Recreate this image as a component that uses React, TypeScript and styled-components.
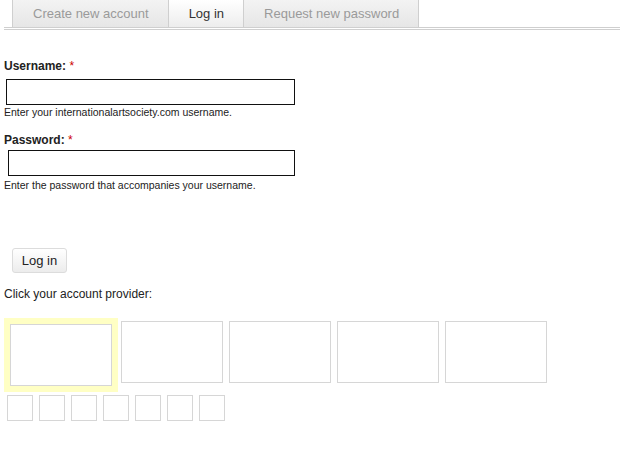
import React from "react";
import styled, { createGlobalStyle } from "styled-components";

const GlobalStyle = createGlobalStyle`
  html, body {
    margin: 0;
    padding: 0;
    background: #ffffff;
  }
  body {
    font-family: "Liberation Sans", Arial, sans-serif;
    color: #222;
  }
  * { box-sizing: border-box; }
`;

const Page = styled.div`
  width: 620px;
  height: 469px;
  overflow: hidden;
`;

const TabBar = styled.ul`
  display: flex;
  list-style: none;
  margin: 0 0 0 4px;
  padding: 0 0 0 8px;
  border-bottom: 3px double #cfcfcf;
`;

const Tab = styled.li<{ $active?: boolean; $last?: boolean }>`
  height: 27px;
  line-height: 27px;
  padding: 0 19px 0 20px;
  font-size: 13px;
  color: ${(p) => (p.$active ? "#333" : "#9a9a9a")};
  background: ${(p) =>
    p.$active
      ? "linear-gradient(#ffffff, #ededed)"
      : "linear-gradient(#f3f3f3, #e6e6e6)"};
  border-left: 1px solid #cfcfcf;
  border-right: ${(p) => (p.$last ? "1px solid #cfcfcf" : "none")};
  white-space: nowrap;
`;

const Form = styled.form`
  padding: 29px 0 0 4px;
`;

const Field = styled.div<{ $space: number }>`
  margin-bottom: ${(p) => p.$space}px;
`;

const Label = styled.label<{ $gap: number }>`
  display: block;
  font-size: 12px;
  line-height: 15px;
  font-weight: bold;
  color: #222;
  margin-bottom: ${(p) => p.$gap}px;
`;

const Required = styled.span`
  color: #cc0000;
  font-weight: normal;
`;

const TextInput = styled.input<{ $indent: number; $w: number }>`
  display: block;
  width: ${(p) => p.$w}px;
  height: 26px;
  margin: 0 0 0 ${(p) => p.$indent}px;
  border: 1px solid #111;
  padding: 2px 4px;
  font-family: "Liberation Sans", Arial, sans-serif;
  font-size: 12px;
  outline: none;
  background: #fff;
`;

const Description = styled.div<{ $top: number }>`
  font-size: 10.5px;
  line-height: 13px;
  color: #222;
  margin-top: ${(p) => p.$top}px;
`;

const SubmitButton = styled.button`
  display: block;
  margin: 56px 0 0 8px;
  width: 55px;
  height: 25px;
  padding: 0;
  font-family: "Liberation Sans", Arial, sans-serif;
  font-size: 13px;
  color: #222;
  background: linear-gradient(#ffffff, #ececec);
  border: 1px solid #dcdcdc;
  border-radius: 3px;
`;

const ProviderPrompt = styled.div`
  font-size: 12px;
  line-height: 15px;
  color: #222;
  margin-top: 14px;
`;

const LargeProviders = styled.ul`
  display: flex;
  align-items: flex-start;
  gap: 6px;
  list-style: none;
  margin: 19px 0 0 0;
  padding: 0;
`;

const LargeProvider = styled.li<{ $selected?: boolean }>`
  width: 102px;
  height: 62px;
  border: 1px solid #d6d6d6;
  background: #fff;
  margin: ${(p) => (p.$selected ? "3px 3px 0 6px" : "0")};
  box-shadow: ${(p) => (p.$selected ? "0 0 0 6px #ffffc4" : "none")};
`;

const SmallProviders = styled.ul`
  display: flex;
  gap: 6px;
  list-style: none;
  margin: 9px 0 0 3px;
  padding: 0;
`;

const SmallProvider = styled.li`
  width: 26px;
  height: 26px;
  border: 1px solid #d6d6d6;
  background: #fff;
`;

const largeCount = [0, 1, 2, 3, 4];
const smallCount = [0, 1, 2, 3, 4, 5, 6];

export default function App() {
  return (
    <Page>
      <GlobalStyle />
      <TabBar>
        <Tab>Create new account</Tab>
        <Tab $active>Log in</Tab>
        <Tab $last>Request new password</Tab>
      </TabBar>
      <Form onSubmit={(e) => e.preventDefault()}>
        <Field $space={14}>
          <Label htmlFor="edit-name" $gap={5}>
            Username: <Required>*</Required>
          </Label>
          <TextInput id="edit-name" type="text" $indent={2} $w={289} />
          <Description $top={1}>
            Enter your internationalartsociety.com username.
          </Description>
        </Field>
        <Field $space={0}>
          <Label htmlFor="edit-pass" $gap={2}>
            Password: <Required>*</Required>
          </Label>
          <TextInput id="edit-pass" type="password" $indent={4} $w={287} />
          <Description $top={3}>
            Enter the password that accompanies your username.
          </Description>
        </Field>
        <SubmitButton type="submit">Log in</SubmitButton>
        <ProviderPrompt>Click your account provider:</ProviderPrompt>
        <LargeProviders>
          {largeCount.map((i) => (
            <LargeProvider key={i} $selected={i === 0} />
          ))}
        </LargeProviders>
        <SmallProviders>
          {smallCount.map((i) => (
            <SmallProvider key={i} />
          ))}
        </SmallProviders>
      </Form>
    </Page>
  );
}
